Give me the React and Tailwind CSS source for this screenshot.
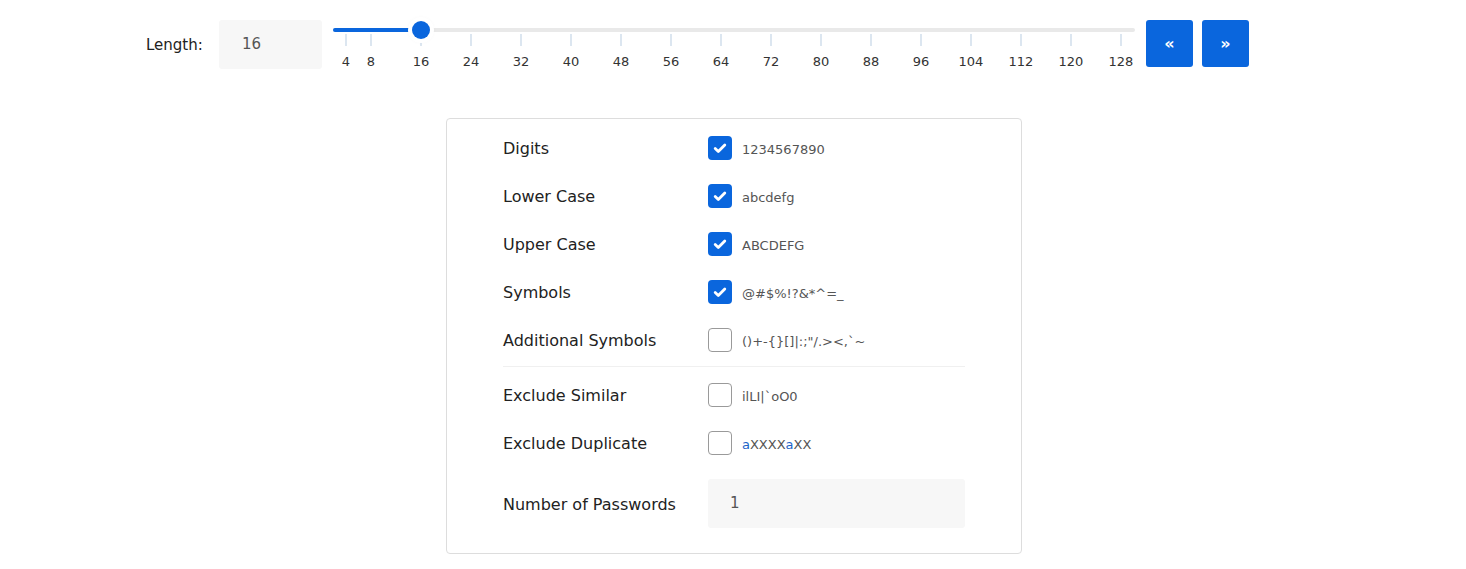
import React from "react";

const ticks = [4, 8, 16, 24, 32, 40, 48, 56, 64, 72, 80, 88, 96, 104, 112, 120, 128];

function Check({ checked }) {
  if (checked) {
    return (
      <div className="w-6 h-6 rounded-[4px] bg-[#0a66dd] flex items-center justify-center shrink-0">
        <svg width="16" height="16" viewBox="0 0 16 16" fill="none">
          <path d="M3.2 8.4l3.1 3L12.8 4.9" stroke="white" strokeWidth="2.8" strokeLinecap="round" strokeLinejoin="round" />
        </svg>
      </div>
    );
  }
  return <div className="w-6 h-6 rounded-[4px] border border-[#9a9a9a] bg-white shrink-0" />;
}

function Row({ label, checked, sample }) {
  return (
    <div className="flex items-center h-12">
      <div className="w-[205px] text-[16px] text-[#222] mt-[2px]">{label}</div>
      <Check checked={checked} />
      <div className="ml-[10px] text-[13px] text-[#555] mt-[3px]">{sample}</div>
    </div>
  );
}

export default function App() {
  const left = 333;
  return (
    <div className="w-[1466px] h-[569px] bg-white font-['DejaVu_Sans',sans-serif] overflow-hidden">
      <div className="flex items-start pt-5 pl-[146px]">
        <div className="h-12 flex items-center text-[15px] text-[#222] w-[73px] pt-[2px]">Length:</div>
        <div className="w-[103px] h-[49px] bg-[#f7f7f7] rounded-[3px] flex items-center pl-[23px] text-[15px] text-[#555]">16</div>
        <div className="relative ml-[11px] w-[802px] h-[56px]">
          <div className="absolute left-0 right-0 top-[8px] h-[4px] rounded-full bg-[#e9e9e9]" />
          <div className="absolute left-0 top-[8px] h-[4px] rounded-full bg-[#0a66dd]" style={{ width: 421 - left }} />
          {ticks.map((t) => {
            const x = 346 + (t - 4) * 6.25 - left;
            return (
              <React.Fragment key={t}>
                <div className="absolute top-[14px] w-[2px] h-[12px] bg-[#dce6f0]" style={{ left: x - 1 }} />
                <div className="absolute top-[32px] w-10 text-center text-[13px] text-[#333]" style={{ left: x - 20 }}>{t}</div>
              </React.Fragment>
            );
          })}
          <div className="absolute top-[1px] w-[18px] h-[18px] rounded-full bg-[#0a66dd] ring-4 ring-white shadow-[0_0_6px_rgba(0,0,0,0.15)]" style={{ left: 421 - left - 9 }} />
        </div>
        <button className="ml-[11px] w-[47px] h-[47px] rounded-[3px] bg-[#0a66dd] text-white text-[16px] font-bold flex items-center justify-center">«</button>
        <button className="ml-[9px] w-[47px] h-[47px] rounded-[3px] bg-[#0a66dd] text-white text-[16px] font-bold flex items-center justify-center">»</button>
      </div>

      <div className="mt-[42px] ml-[446px] w-[576px] border border-[#dddddd] rounded-[4px] pt-[5px] pb-[25px] pl-[56px] pr-[56px]">
        <Row label="Digits" checked sample="1234567890" />
        <Row label="Lower Case" checked sample="abcdefg" />
        <Row label="Upper Case" checked sample="ABCDEFG" />
        <Row label="Symbols" checked sample="@#$%!?&*^=_" />
        <Row label="Additional Symbols" sample={"()+-{}[]|:;\"/.><,`~"} />
        <div className="mt-[2px] mb-[4px] border-t border-[#f0f0f0]" />
        <Row label="Exclude Similar" sample="ilLI|`oO0" />
        <Row
          label="Exclude Duplicate"
          sample={
            <span>
              <span className="text-[#1c64c8]">a</span>XXXX<span className="text-[#1c64c8]">a</span>XX
            </span>
          }
        />
        <div className="flex items-center mt-3">
          <div className="w-[205px] text-[16px] text-[#222] mt-[2px]">Number of Passwords</div>
          <div className="w-[257px] h-[49px] bg-[#f7f7f7] rounded-[3px] flex items-center pl-[22px] text-[15px] text-[#555]">1</div>
        </div>
      </div>
    </div>
  );
}
